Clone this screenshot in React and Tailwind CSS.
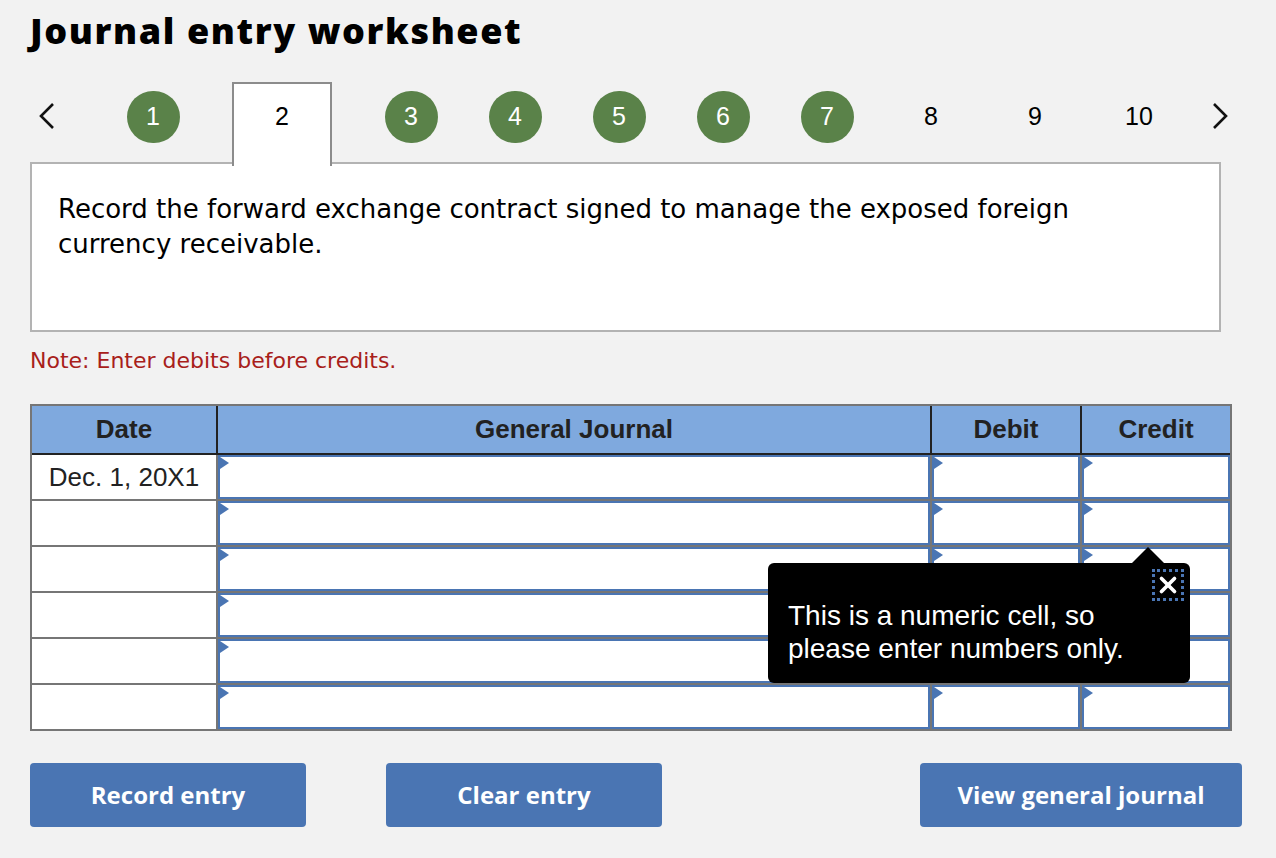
import { X } from "lucide-react";

const TABS = [
  { n: 1, done: true },
  { n: 2, active: true },
  { n: 3, done: true },
  { n: 4, done: true },
  { n: 5, done: true },
  { n: 6, done: true },
  { n: 7, done: true },
  { n: 8 },
  { n: 9 },
  { n: 10 },
];

const ROWS = ["Dec. 1, 20X1", "", "", "", "", ""];

const Chevron = ({ dir }) => (
  <svg width="18" height="28" viewBox="0 0 18 28" fill="none">
    <polyline
      points={dir === "left" ? "15,2 3,14 15,26" : "3,2 15,14 3,26"}
      stroke="#111"
      strokeWidth="2.6"
      strokeLinejoin="miter"
    />
  </svg>
);

// celda editable con el triangulito azul
const InputCell = () => (
  <div className="h-[44px]">
    <div className="relative h-full border-2 border-[#4a75b3] bg-white">
      <div className="absolute left-0 top-0 w-0 h-0 border-y-[6px] border-y-transparent border-l-[9px] border-l-[#4a75b3]" />
    </div>
  </div>
);

const App = () => {
  return (
    <div className="min-h-screen w-full bg-[#f2f2f2] pl-[30px] pt-[8px] pb-[30px]">
      {/* Título */}
      <h1 className="text-[36px] leading-[46px] font-black tracking-[1.6px] text-black font-['Open_Sans',sans-serif]">
        Journal entry worksheet
      </h1>

      {/* Pestañas */}
      <div className="mt-[28px] flex items-start h-[82px] font-['Liberation_Sans',Arial,sans-serif]">
        <div className="w-[71px] h-[52px] mt-[8px] flex items-center pl-[8px]">
          <Chevron dir="left" />
        </div>
        {TABS.map((t) =>
          t.active ? (
            <div
              key={t.n}
              className="relative z-10 mx-[27px] w-[100px] h-[84px] bg-white border-2 border-b-0 border-[#8c8c8c] flex justify-center"
            >
              <div className="mt-[7px] h-[52px] flex items-center text-[25px] text-black">{t.n}</div>
            </div>
          ) : (
            <div key={t.n} className="w-[104px] h-[52px] mt-[9px] flex items-center justify-center">
              {t.done ? (
                <div className="w-[53px] h-[52px] rounded-full bg-[#5a8249] flex items-center justify-center text-white text-[25px]">
                  {t.n}
                </div>
              ) : (
                <span className="text-[25px] text-black">{t.n}</span>
              )}
            </div>
          )
        )}
        <div className="h-[52px] mt-[8px] flex items-center pl-[20px]">
          <Chevron dir="right" />
        </div>
      </div>

      {/* Enunciado */}
      <div className="-mt-[2px] w-[1191px] h-[170px] bg-white border-2 border-[#b3b3b3] pl-[26px] pt-[28px] pr-[60px]">
        <p className="text-[26px] leading-[35px] text-black font-['DejaVu_Sans',Verdana,sans-serif]">
          Record the forward exchange contract signed to manage the exposed foreign currency receivable.
        </p>
      </div>

      <p className="mt-[15px] text-[22px] leading-[28px] text-[#a8201a] font-['DejaVu_Sans',Verdana,sans-serif]">
        Note: Enter debits before credits.
      </p>

      {/* Tabla */}
      <div className="relative mt-[29px] w-[1202px] border-2 border-[#767676] font-['Liberation_Sans',Arial,sans-serif]">
        <div className="grid grid-cols-[184px_714px_150px_150px] bg-[#7fa9de] border-b-2 border-[#222] h-[49px] text-[26px] font-bold text-[#222]">
          <div className="flex items-center justify-center">Date</div>
          <div className="flex items-center justify-center border-l-2 border-[#222]">General Journal</div>
          <div className="flex items-center justify-center border-l-2 border-[#222]">Debit</div>
          <div className="flex items-center justify-center border-l-2 border-[#222]">Credit</div>
        </div>
        {ROWS.map((d, i) => (
          <div
            key={i}
            className={`grid grid-cols-[184px_714px_150px_150px] bg-white ${i > 0 ? "border-t-2 border-[#767676]" : ""}`}
          >
            <div className="h-[44px] flex items-center justify-center text-[26px] text-[#222]">{d}</div>
            <div className="border-l-2 border-[#767676]">
              <InputCell />
            </div>
            <div className="border-l-2 border-[#767676]">
              <InputCell />
            </div>
            <div className="border-l-2 border-[#767676]">
              <InputCell />
            </div>
          </div>
        ))}

        {/* Tooltip */}
        <div className="absolute left-[736px] top-[157px] z-20 w-[422px] h-[120px] rounded-[6px] bg-black">
          <div className="absolute -top-[16px] left-[364px] w-0 h-0 border-x-[16px] border-x-transparent border-b-[16px] border-b-black" />
          <button className="absolute right-[6px] top-[6px] w-[32px] h-[32px] border-[3px] border-dotted border-[#4a75b3] flex items-center justify-center">
            <X size={26} strokeWidth={3.4} color="#fff" />
          </button>
          <p className="pl-[20px] pt-[36px] text-[28px] leading-[33px] text-white">
            This is a numeric cell, so
            <br />
            please enter numbers only.
          </p>
        </div>
      </div>

      {/* Botones */}
      <div className="mt-[32px] flex w-[1212px] font-['Open_Sans',sans-serif]">
        <button className="w-[276px] h-[64px] rounded-[4px] bg-[#4a75b3] text-white text-[24px] font-bold">
          Record entry
        </button>
        <button className="ml-[80px] w-[276px] h-[64px] rounded-[4px] bg-[#4a75b3] text-white text-[24px] font-bold">
          Clear entry
        </button>
        <button className="ml-auto w-[322px] h-[64px] rounded-[4px] bg-[#4a75b3] text-white text-[24px] font-bold">
          View general journal
        </button>
      </div>
    </div>
  );
};

export default App;
